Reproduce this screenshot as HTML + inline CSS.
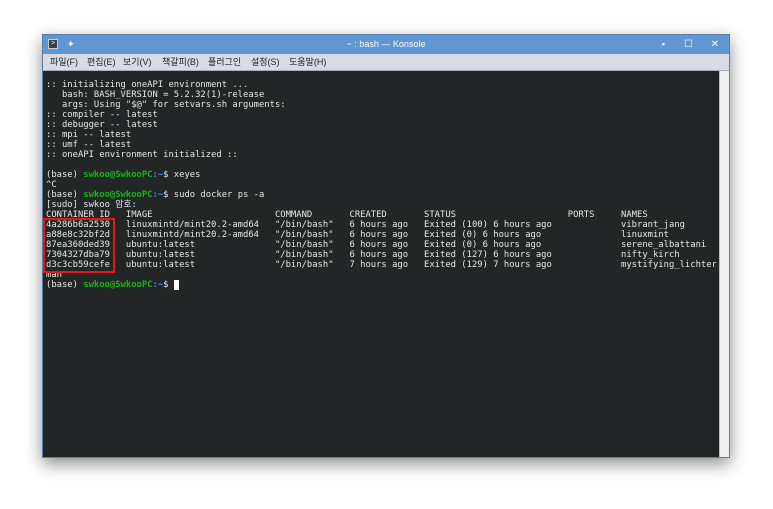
<!DOCTYPE html>
<html><head><meta charset="utf-8"><style>
body{margin:0;width:773px;height:509px;background:#fff;position:relative;overflow:hidden;font-family:"Liberation Sans","Noto Sans CJK KR",sans-serif}
.win{position:absolute;left:42px;top:34px;width:688px;height:424px;background:#232627;box-shadow:0 6px 16px rgba(0,0,0,.45);border:1px solid #5a7ea8;box-sizing:border-box}
.title{position:absolute;left:0;top:0;right:0;height:19px;background:#6096d2;color:#fff;font-size:9px;text-align:center;line-height:19px}
.menu{position:absolute;left:0;top:19px;right:0;height:16px;background:#d6dbe4;font-size:9px;line-height:16px;color:#222;border-bottom:1px solid #aab}
.menu span{position:absolute;top:0}
.sb{position:absolute;right:0;top:36px;width:9px;bottom:0;background:#eff0f1;border-left:1px solid #bbb}
pre{position:absolute;left:3px;top:45px;margin:0;font-family:"DejaVu Sans Mono","Noto Sans CJK KR",monospace;font-size:8.86px;line-height:10px;color:#e8e8e8}
.g{color:#18b218;font-weight:bold}.b{color:#3d8ee0;font-weight:bold}
.box{position:absolute;left:0px;top:183px;width:72px;height:55px;border:2px solid #e8141c;box-sizing:border-box}
.ic{position:absolute;top:4px;left:5px;width:10px;height:10px;background:#3a3f44;border:1px solid #ccc;box-sizing:border-box;color:#fff;font-size:7px;line-height:8px;text-align:center}
</style></head><body>
<div class="win">
<div class="title"><div class="ic">&gt;</div><span style="position:absolute;left:24px;top:0;font-size:9px">✦</span>~ : bash — Konsole
<span style="position:absolute;right:64px;top:0">▪</span><span style="position:absolute;right:36px;top:0;font-size:10px">☐</span><span style="position:absolute;right:10px;top:0;font-size:10px">✕</span></div>
<div class="menu"><span style="left:7px">파일(F)</span><span style="left:44px">편집(E)</span><span style="left:80px">보기(V)</span><span style="left:119px">책갈피(B)</span><span style="left:165px">플러그인</span><span style="left:208px">설정(S)</span><span style="left:246px">도움말(H)</span></div>
<div class="sb"></div>
<pre>:: initializing oneAPI environment ...
   bash: BASH_VERSION = 5.2.32(1)-release
   args: Using "$@" for setvars.sh arguments:
:: compiler -- latest
:: debugger -- latest
:: mpi -- latest
:: umf -- latest
:: oneAPI environment initialized ::

(base) <span class="g">swkoo@SwkooPC</span><span class="b">:~</span>$ xeyes
^C
(base) <span class="g">swkoo@SwkooPC</span><span class="b">:~</span>$ sudo docker ps -a
[sudo] swkoo 암호:
CONTAINER ID   IMAGE                       COMMAND       CREATED       STATUS                     PORTS     NAMES
4a286b6a2530   linuxmintd/mint20.2-amd64   "/bin/bash"   6 hours ago   Exited (100) 6 hours ago             vibrant_jang
a88e8c32bf2d   linuxmintd/mint20.2-amd64   "/bin/bash"   6 hours ago   Exited (0) 6 hours ago               linuxmint
87ea360ded39   ubuntu:latest               "/bin/bash"   6 hours ago   Exited (0) 6 hours ago               serene_albattani
7304327dba79   ubuntu:latest               "/bin/bash"   6 hours ago   Exited (127) 6 hours ago             nifty_kirch
d3c3cb59cefe   ubuntu:latest               "/bin/bash"   7 hours ago   Exited (129) 7 hours ago             mystifying_lichter
man
(base) <span class="g">swkoo@SwkooPC</span><span class="b">:~</span>$ <span style="background:#fff">&nbsp;</span></pre>
<div class="box"></div>
</div>
</body></html>
